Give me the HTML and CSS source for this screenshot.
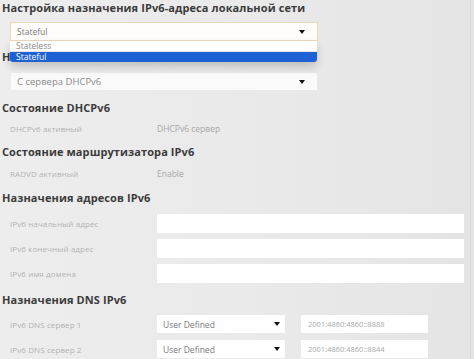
FILE: index.html
```html
<!DOCTYPE html>
<html lang="ru">
<head>
    <meta charset="UTF-8">
    <meta name="viewport" content="width=device-width, initial-scale=1.0">
    <title>IPv6 LAN</title>
    <link rel="stylesheet" href="styles.css">
</head>
<body>
    <div class="page">
        <h2 class="title">Настройка назначения IPv6-адреса локальной сети</h2>
        <div class="select-wrap">
            <div class="select select-wide select-open">
                <span>Stateful</span>
                <span class="arrow"></span>
            </div>
            <ul class="dropdown">
                <li>Stateless</li>
                <li class="active">Stateful</li>
            </ul>
        </div>

        <h2 class="heading h-assign">Назначение IPv6</h2>
        <div class="select select-wide select-small">
            <span>С сервера DHCPv6</span>
            <span class="arrow"></span>
        </div>

        <h2 class="heading h-dhcp">Состояние DHCPv6</h2>
        <div class="row row-status row-dhcp">
            <span class="label">DHCPv6 активный</span>
            <span class="value">DHCPv6 сервер</span>
        </div>

        <h2 class="heading h-router">Состояние маршрутизатора IPv6</h2>
        <div class="row row-status row-radvd">
            <span class="label">RADVD активный</span>
            <span class="value">Enable</span>
        </div>

        <h2 class="heading h-addr">Назначения адресов IPv6</h2>
        <div class="rows rows-addr">
            <div class="row">
                <span class="label">IPv6 начальный адрес</span>
                <div class="input input-wide"></div>
            </div>
            <div class="row">
                <span class="label">IPv6 конечный адрес</span>
                <div class="input input-wide"></div>
            </div>
            <div class="row">
                <span class="label">IPv6 имя домена</span>
                <div class="input input-wide"></div>
            </div>
        </div>

        <h2 class="heading h-dns">Назначения DNS IPv6</h2>
        <div class="rows rows-dns">
            <div class="row row-dns">
                <span class="label">IPv6 DNS сервер 1</span>
                <div class="select select-dns">
                    <span>User Defined</span>
                    <span class="arrow"></span>
                </div>
                <div class="input input-dns">2001:4860:4860::8888</div>
            </div>
            <div class="row row-dns">
                <span class="label">IPv6 DNS сервер 2</span>
                <div class="select select-dns">
                    <span>User Defined</span>
                    <span class="arrow"></span>
                </div>
                <div class="input input-dns">2001:4860:4860::8844</div>
            </div>
        </div>
    </div>
</body>
</html>
```

FILE: styles.css
```css
body {
    margin: 0;
    font-family: "Open Sans", "DejaVu Sans", sans-serif;
    background: linear-gradient(90deg, #ededed 0%, #e9e9e9 60%, #e4e4e4 100%);
    overflow: hidden;
}
.page {
    width: 471px;
    height: 359px;
    border-right: 1px solid #d9d9d9;
    box-sizing: border-box;
    padding-left: 2px;
}
.title, .heading {
    margin: 0;
    font-size: 11px;
    font-weight: 700;
    line-height: 16px;
    color: #3b3b3b;
    letter-spacing: 0.1px;
}
.h-assign { margin-top: 8px; }
.h-dhcp { margin-top: 10px; }
.h-router { margin-top: 6px; }
.h-addr { margin-top: 7px; }
.h-dns { margin-top: 9px; }

.select-wrap {
    position: relative;
    margin-top: 6px;
}
.select {
    display: flex;
    align-items: center;
    justify-content: space-between;
    box-sizing: border-box;
    background: #fff;
    font-size: 8.5px;
    color: #777;
}
.select-wide {
    margin-left: 8px;
    width: 308px;
    height: 19px;
    padding: 0 12px 0 6px;
}
.select-open {
    border: 1px solid #ecd6b8;
    background: #fffdf9;
}
.select-small {
    margin-top: 8px;
    height: 17px;
    width: 306px;
    margin-left: 9px;
    background: #fafafa;
    font-size: 9.5px;
    color: #8a8a8a;
}
.arrow {
    width: 0;
    height: 0;
    border-left: 3px solid transparent;
    border-right: 3px solid transparent;
    border-top: 4px solid #111;
}
.dropdown {
    position: absolute;
    top: 19px;
    left: 8px;
    width: 307px;
    margin: 0;
    padding: 0;
    list-style: none;
    font-size: 8.5px;
    box-shadow: 0 5px 8px rgba(0, 0, 0, 0.18);
    border-radius: 0 0 3px 3px;
}
.dropdown li {
    height: 10px;
    line-height: 10px;
    padding-left: 6px;
    background: #fff;
    color: #8a8a8a;
    border-bottom: 1px solid #e4e8ee;
}
.dropdown li.active {
    height: 10px;
    background: #1d61d4;
    color: #fff;
    border-bottom: none;
    border-radius: 0 0 3px 3px;
}

.row {
    display: grid;
    grid-template-columns: 147px 1fr;
    align-items: center;
    padding-left: 8px;
    height: 19px;
}
.row-status { height: 20px; }
.row-dhcp { margin-top: 2px; }
.row-radvd { margin-top: 3px; }
.label {
    font-size: 8px;
    color: #b3b3b3;
    letter-spacing: 0.1px;
}
.value {
    font-size: 8.5px;
    color: #a7a7a7;
}
.rows {
    display: flex;
    flex-direction: column;
    gap: 6px;
}
.rows-addr { margin-top: 8px; }
.rows-dns {
    margin-top: 7px;
    gap: 7px;
}
.input {
    box-sizing: border-box;
    background: #fff;
    height: 19px;
}
.input-wide { width: 307px; }
.row-dns {
    grid-template-columns: 147px 144px 1fr;
    height: 18px;
}
.select-dns {
    width: 128px;
    height: 18px;
    padding: 0 5px 0 6px;
    font-size: 8.5px;
    color: #7a7a7a;
}
.input-dns {
    width: 127px;
    height: 18px;
    line-height: 18px;
    padding-left: 7px;
    font-size: 7.5px;
    color: #a9a9a9;
}
```
